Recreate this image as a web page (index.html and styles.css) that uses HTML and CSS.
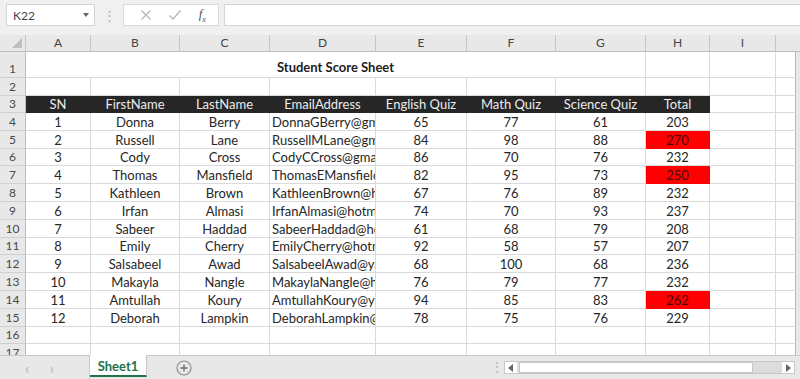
FILE: index.html
```html
<!DOCTYPE html>
<html lang="en">
<head>
    <meta charset="UTF-8">
    <meta name="viewport" content="width=device-width, initial-scale=1.0">
    <title>Student Score Sheet</title>
    <link rel="stylesheet" href="styles.css">
</head>
<body>
    <div class="toolbar">
        <div class="namebox">
            <span>K22</span>
            <span class="caret"></span>
        </div>
        <div class="grip">&#8942;</div>
        <div class="fx-buttons">
            <svg class="icon" width="12" height="12" viewBox="0 0 12 12">
                <path d="M1.5 1.5 L10.5 10.5 M10.5 1.5 L1.5 10.5" stroke="#b5b5b5" stroke-width="1.2" fill="none"/>
            </svg>
            <svg class="icon" width="14" height="12" viewBox="0 0 14 12">
                <path d="M1.5 6.5 L5 10 L12.5 1.5" stroke="#b5b5b5" stroke-width="1.3" fill="none"/>
            </svg>
            <span class="fx"><i>f</i><sub>x</sub></span>
        </div>
        <div class="formula"></div>
    </div>

    <div class="sheet">
        <div class="row col-head">
            <div class="corner">
                <svg width="10" height="10" viewBox="0 0 10 10"><path d="M10 0 L10 10 L0 10 Z" fill="#bfbfbf"/></svg>
            </div>
            <div>A</div><div>B</div><div>C</div><div>D</div><div>E</div>
            <div>F</div><div>G</div><div>H</div><div>I</div><div class="rest"></div>
        </div>

        <div class="row r-title">
            <div class="rh">1</div>
            <div class="title">Student Score Sheet</div>
            <div></div><div></div><div></div>
        </div>

        <div class="row r-gap">
            <div class="rh">2</div>
            <div></div><div></div><div></div><div></div><div></div>
            <div></div><div></div><div></div><div></div><div></div>
        </div>

        <div class="row r-head">
            <div class="rh">3</div>
            <div class="hd">SN</div>
            <div class="hd">FirstName</div>
            <div class="hd">LastName</div>
            <div class="hd">EmailAddress</div>
            <div class="hd">English Quiz</div>
            <div class="hd">Math Quiz</div>
            <div class="hd">Science Quiz</div>
            <div class="hd">Total</div>
            <div></div><div></div>
        </div>

        <div class="row data">
            <div class="rh">4</div>
            <div>1</div><div>Donna</div><div>Berry</div>
            <div class="email">DonnaGBerry@gmail.com</div>
            <div>65</div><div>77</div><div>61</div><div>203</div>
            <div></div><div></div>
        </div>
        <div class="row data">
            <div class="rh">5</div>
            <div>2</div><div>Russell</div><div>Lane</div>
            <div class="email">RussellMLane@gmail.com</div>
            <div>84</div><div>98</div><div>88</div><div class="alert">270</div>
            <div></div><div></div>
        </div>
        <div class="row data">
            <div class="rh">6</div>
            <div>3</div><div>Cody</div><div>Cross</div>
            <div class="email">CodyCCross@gmail.com</div>
            <div>86</div><div>70</div><div>76</div><div>232</div>
            <div></div><div></div>
        </div>
        <div class="row data">
            <div class="rh">7</div>
            <div>4</div><div>Thomas</div><div>Mansfield</div>
            <div class="email">ThomasEMansfield@gmail.com</div>
            <div>82</div><div>95</div><div>73</div><div class="alert">250</div>
            <div></div><div></div>
        </div>
        <div class="row data">
            <div class="rh">8</div>
            <div>5</div><div>Kathleen</div><div>Brown</div>
            <div class="email">KathleenBrown@hotmail.com</div>
            <div>67</div><div>76</div><div>89</div><div>232</div>
            <div></div><div></div>
        </div>
        <div class="row data">
            <div class="rh">9</div>
            <div>6</div><div>Irfan</div><div>Almasi</div>
            <div class="email">IrfanAlmasi@hotmail.com</div>
            <div>74</div><div>70</div><div>93</div><div>237</div>
            <div></div><div></div>
        </div>
        <div class="row data">
            <div class="rh">10</div>
            <div>7</div><div>Sabeer</div><div>Haddad</div>
            <div class="email">SabeerHaddad@hotmail.com</div>
            <div>61</div><div>68</div><div>79</div><div>208</div>
            <div></div><div></div>
        </div>
        <div class="row data">
            <div class="rh">11</div>
            <div>8</div><div>Emily</div><div>Cherry</div>
            <div class="email">EmilyCherry@hotmail.com</div>
            <div>92</div><div>58</div><div>57</div><div>207</div>
            <div></div><div></div>
        </div>
        <div class="row data">
            <div class="rh">12</div>
            <div>9</div><div>Salsabeel</div><div>Awad</div>
            <div class="email">SalsabeelAwad@yahoo.com</div>
            <div>68</div><div>100</div><div>68</div><div>236</div>
            <div></div><div></div>
        </div>
        <div class="row data">
            <div class="rh">13</div>
            <div>10</div><div>Makayla</div><div>Nangle</div>
            <div class="email">MakaylaNangle@hotmail.com</div>
            <div>76</div><div>79</div><div>77</div><div>232</div>
            <div></div><div></div>
        </div>
        <div class="row data">
            <div class="rh">14</div>
            <div>11</div><div>Amtullah</div><div>Koury</div>
            <div class="email">AmtullahKoury@yahoo.com</div>
            <div>94</div><div>85</div><div>83</div><div class="alert">262</div>
            <div></div><div></div>
        </div>
        <div class="row data">
            <div class="rh">15</div>
            <div>12</div><div>Deborah</div><div>Lampkin</div>
            <div class="email">DeborahLampkin@gmail.com</div>
            <div>78</div><div>75</div><div>76</div><div>229</div>
            <div></div><div></div>
        </div>
        <div class="row r-empty">
            <div class="rh">16</div>
            <div></div><div></div><div></div><div></div><div></div>
            <div></div><div></div><div></div><div></div><div></div>
        </div>
        <div class="row r-empty">
            <div class="rh">17</div>
            <div></div><div></div><div></div><div></div><div></div>
            <div></div><div></div><div></div><div></div><div></div>
        </div>
    </div>

    <div class="tabbar">
        <div class="nav">
            <span>&#8249;</span>
            <span>&#8250;</span>
        </div>
        <div class="tab">Sheet1</div>
        <div class="add-sheet">
            <svg width="16" height="16" viewBox="0 0 16 16">
                <circle cx="8" cy="8" r="7" stroke="#8a8a8a" stroke-width="1.2" fill="none"/>
                <path d="M8 4.5 V11.5 M4.5 8 H11.5" stroke="#6f6f6f" stroke-width="1.4"/>
            </svg>
        </div>
        <div class="spacer"></div>
        <div class="grip small">&#8942;</div>
        <div class="hscroll">
            <div class="sbtn">
                <svg width="6" height="8" viewBox="0 0 6 8"><path d="M5 0 L5 8 L0 4 Z" fill="#666"/></svg>
            </div>
            <div class="thumb"></div>
            <div class="track"></div>
            <div class="sbtn">
                <svg width="6" height="8" viewBox="0 0 6 8"><path d="M1 0 L1 8 L6 4 Z" fill="#666"/></svg>
            </div>
        </div>
    </div>
</body>
</html>
```

FILE: styles.css
```css
body {
    margin: 0;
    padding: 0;
    width: 800px;
    height: 379px;
    overflow: hidden;
    background-color: #e8e8e8;
    font-family: Lato, "Liberation Sans", sans-serif;
    color: #262626;
}

/* formula bar */
.toolbar {
    height: 35px;
    background-color: #f0f0f0;
    display: flex;
    align-items: flex-start;
    padding: 4px 0 0 6px;
    box-sizing: border-box;
}

.namebox {
    width: 89px;
    height: 22px;
    box-sizing: border-box;
    background-color: #fff;
    border: 1px solid #d4d4d4;
    display: flex;
    align-items: center;
    justify-content: space-between;
    padding: 0 5px 0 6px;
    font-size: 12px;
    color: #444;
}

.caret {
    width: 0;
    height: 0;
    border-left: 3.5px solid transparent;
    border-right: 3.5px solid transparent;
    border-top: 4px solid #666;
}

.grip {
    width: 28px;
    text-align: center;
    color: #b0b0b0;
    font-size: 13px;
    line-height: 22px;
}

.fx-buttons {
    width: 96px;
    height: 22px;
    box-sizing: border-box;
    background-color: #fff;
    border: 1px solid #d9d9d9;
    display: flex;
    align-items: center;
    justify-content: space-around;
    padding: 0 4px 0 8px;
}

.fx {
    font-family: "Liberation Serif", serif;
    color: #555;
    font-size: 13px;
}

.fx sub {
    font-size: 8px;
    font-style: italic;
}

.formula {
    flex: 1;
    height: 22px;
    margin-left: 5px;
    box-sizing: border-box;
    background-color: #fff;
    border: 1px solid #d4d4d4;
    border-right: none;
}

/* grid */
.sheet {
    height: 320px;
    overflow: hidden;
    background-color: #e8e8e8;
}

.row {
    display: grid;
    grid-template-columns: 26px 65px 89px 90px 106px 91px 89px 90px 64px 66px 20px;
    font-size: 13px;
    line-height: 14px;
}

.row > div {
    box-sizing: border-box;
    border-right: 1px solid #dadada;
    border-bottom: 1px solid #dadada;
    background-color: #fff;
    display: flex;
    align-items: flex-end;
    justify-content: center;
    padding-bottom: 1px;
    white-space: nowrap;
    overflow: hidden;
}

.row > div:last-child {
    border-right-color: #b8b8b8;
}

.col-head {
    height: 17px;
    grid-template-columns: 26px 65px 89px 90px 106px 91px 89px 90px 64px 66px 24px;
}

.col-head > div {
    background-color: #e8e8e8;
    border-right-color: #c6c6c6;
    border-bottom-color: #bcbcbc;
    font-size: 12px;
    color: #444;
    align-items: center;
    padding-bottom: 0;
}

.col-head > div.rest {
    border-right: none;
}

.row > .corner {
    justify-content: flex-end;
    align-items: flex-end;
    padding: 0 3px 3px 0;
}

.row > .rh {
    background-color: #e8e8e8;
    border-right-color: #bcbcbc;
    border-bottom-color: #d0d0d0;
    font-size: 12px;
    color: #4a4a4a;
}

.r-title {
    height: 26px;
}

.row > .title {
    grid-column: span 7;
    font-weight: bold;
    color: #1e1e1e;
    padding-bottom: 3px;
}

.r-gap {
    height: 18px;
}

.r-head {
    height: 17px;
}

.row > .hd {
    background-color: #262626;
    border-color: #262626;
    color: #ececec;
}

.data {
    height: 17.8px;
}

.row > .email {
    justify-content: flex-start;
    padding-left: 2px;
}

.row > .alert {
    background-color: #ff0000;
    border-color: #ff0000;
    color: #4a0606;
}

.r-empty {
    height: 17.4px;
}

.r-empty:last-child {
    height: 18px;
}

/* sheet tabs */
.tabbar {
    height: 24px;
    background-color: #e8e8e8;
    border-top: 1px solid #c8c8c8;
    box-sizing: border-box;
    display: flex;
    align-items: stretch;
}

.nav {
    width: 90px;
    display: flex;
    align-items: center;
    gap: 20px;
    padding-left: 25px;
    box-sizing: border-box;
    color: #b4b4b4;
    font-size: 16px;
    border-right: 1px solid #c8c8c8;
}

.tab {
    width: 57px;
    margin-top: -1px;
    background-color: #fff;
    color: #217346;
    font-weight: bold;
    font-size: 13px;
    display: flex;
    align-items: center;
    justify-content: center;
    padding-top: 1px;
    box-sizing: border-box;
    border-bottom: 2px solid #217346;
    border-right: 1px solid #c8c8c8;
    margin-bottom: 2px;
}

.add-sheet {
    width: 74px;
    display: flex;
    align-items: center;
    justify-content: center;
}

.spacer {
    flex: 1;
}

.grip.small {
    width: 14px;
    line-height: 22px;
    font-size: 12px;
}

.hscroll {
    width: 291px;
    height: 13px;
    margin: 5px 5px 0 0;
    display: flex;
    border: 1px solid #c8c8c8;
    background-color: #dcdcdc;
    box-sizing: border-box;
}

.sbtn {
    width: 12px;
    background-color: #fff;
    display: flex;
    align-items: center;
    justify-content: center;
}

.thumb {
    width: 234px;
    margin-left: 2px;
    background-color: #fff;
    border: 1px solid #c8c8c8;
    box-sizing: border-box;
}

.track {
    flex: 1;
}
```
